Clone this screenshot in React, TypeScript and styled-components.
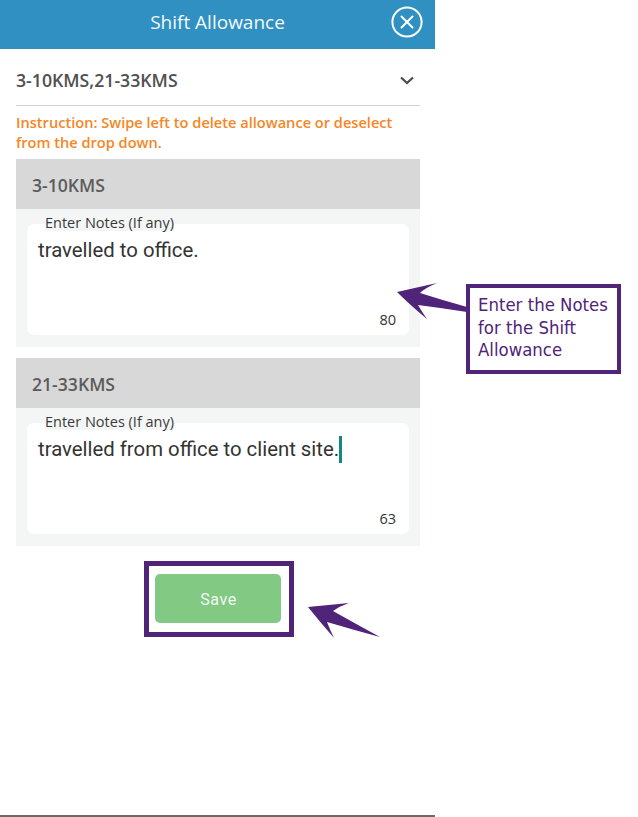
import React from "react";
import styled, { createGlobalStyle } from "styled-components";

const Global = createGlobalStyle`
  html, body { margin: 0; padding: 0; background: #fff; }
  body { font-family: "Open Sans", sans-serif; }
`;

const Page = styled.div`
  position: relative;
  width: 638px;
  height: 817px;
  overflow: hidden;
`;

const Phone = styled.main`
  width: 435px;
  height: 817px;
  box-sizing: border-box;
  border-bottom: 2px solid #6b6b6b;
  display: flex;
  flex-direction: column;
`;

const Header = styled.header`
  height: 49px;
  flex: none;
  box-sizing: border-box;
  padding: 0 12px 5px;
  background: #2f90c1;
  display: grid;
  grid-template-columns: 1fr auto 1fr;
  align-items: center;
`;

const Title = styled.h1`
  grid-column: 2;
  margin: 0;
  font: 400 19px/24px "Open Sans", sans-serif;
  color: #f4f9fc;
`;

const CloseButton = styled.svg`
  grid-column: 3;
  justify-self: end;
  display: block;
`;

const Body = styled.div`
  padding: 0 15px 0 16px;
  display: flex;
  flex-direction: column;
`;

const Select = styled.div`
  height: 57px;
  box-sizing: border-box;
  border-bottom: 1px solid #d2d2d2;
  display: flex;
  align-items: center;
  justify-content: space-between;
  padding: 6px 6px 0 0;
  font: 600 17.7px/22px "Open Sans", sans-serif;
  color: #505050;
`;

const Instruction = styled.p`
  margin: 6px 0 7px;
  font: 600 14.6px/20px "Open Sans", sans-serif;
  color: #f6861f;
`;

const Section = styled.section<{ $last?: boolean }>`
  margin-bottom: ${(p) => (p.$last ? 0 : 11)}px;
`;

const SectionHead = styled.div`
  height: 50px;
  background: #d8d8d8;
  display: flex;
  align-items: center;
  padding: 1px 0 0 16px;
  box-sizing: border-box;
  font: 600 17.6px/22px "Open Sans", sans-serif;
  color: #5c5c5c;
`;

const SectionBody = styled.div`
  background: #f4f6f6;
  padding: 15px 11px 12px;
`;

const NoteBox = styled.div`
  height: 111px;
  background: #fff;
  border-radius: 7px;
  padding: 0 13px 6px 11px;
  box-sizing: border-box;
  display: flex;
  flex-direction: column;
`;

const NoteLabel = styled.span`
  align-self: flex-start;
  margin: -10px 0 0 7px;
  font: 400 14.5px/17px "Open Sans", sans-serif;
  color: #3a3a3a;
  background: #f4f6f6;
`;

const NoteText = styled.div`
  margin-top: 5px;
  font: 400 20.35px/28px Roboto, sans-serif;
  color: #333;
  display: flex;
  align-items: center;
`;

const Caret = styled.i`
  flex: none;
  width: 2.5px;
  height: 27px;
  background: #118a7e;
`;

const Counter = styled.span`
  margin-top: auto;
  align-self: flex-end;
  font: 400 14.5px/18px "Open Sans", sans-serif;
  color: #333;
`;

const SaveRow = styled.div`
  display: flex;
  justify-content: center;
  margin-top: 28px;
  padding-right: 1px;
`;

const SaveButton = styled.button`
  width: 126px;
  height: 49px;
  border: 0;
  border-radius: 5px;
  background: #82c984;
  color: #f2f9f2;
  font: 400 16px/20px Roboto, sans-serif;
  letter-spacing: 0.6px;
  padding: 2px 0 0 2px;
`;

const Overlay = styled.svg`
  position: absolute;
  left: 0;
  top: 0;
  pointer-events: none;
`;

const SaveFrame = styled.div`
  position: absolute;
  left: 144px;
  top: 561px;
  width: 150px;
  height: 76px;
  box-sizing: border-box;
  border: 5px solid #4f2479;
`;

const Callout = styled.aside`
  position: absolute;
  left: 466px;
  top: 284px;
  width: 155px;
  height: 90px;
  box-sizing: border-box;
  border: 4px solid #4f2479;
  background: #fff;
  padding: 6px 0 0 8px;
  font: 400 18.4px/22.5px "DejaVu Sans Condensed", "DejaVu Sans", sans-serif;
  color: #4f2479;
`;

const Arrow = styled.path`
  fill: #4f2479;
`;

const notes = [
  { name: "3-10KMS", text: "travelled to office.", left: 80 },
  { name: "21-33KMS", text: "travelled from office to client site.", left: 63, focus: true },
];

export default function App() {
  return (
    <Page>
      <Global />
      <Phone>
        <Header>
          <Title>Shift Allowance</Title>
          <CloseButton width="32" height="32" viewBox="0 0 32 32" fill="none" stroke="#fff">
            <circle cx="16" cy="16" r="14.6" strokeWidth="2" />
            <path d="M10.5 10.5 L21.5 21.5 M21.5 10.5 L10.5 21.5" strokeWidth="2" strokeLinecap="round" />
          </CloseButton>
        </Header>
        <Body>
          <Select>
            <span>3-10KMS,21-33KMS</span>
            <svg width="14" height="9" viewBox="0 0 14 9" fill="none" stroke="#4a4a4a" strokeWidth="2.2">
              <path d="M1 1.5 L7 7 L13 1.5" />
            </svg>
          </Select>
          <Instruction>Instruction: Swipe left to delete allowance or deselect from the drop down.</Instruction>
          {notes.map((n, i) => (
            <Section key={n.name} $last={i === notes.length - 1}>
              <SectionHead>{n.name}</SectionHead>
              <SectionBody>
                <NoteBox>
                  <NoteLabel>Enter Notes (If any)</NoteLabel>
                  <NoteText>
                    {n.text}
                    {n.focus && <Caret />}
                  </NoteText>
                  <Counter>{n.left}</Counter>
                </NoteBox>
              </SectionBody>
            </Section>
          ))}
          <SaveRow>
            <SaveButton>Save</SaveButton>
          </SaveRow>
        </Body>
      </Phone>
      <SaveFrame />
      <Callout>Enter the Notes for the Shift Allowance</Callout>
      <Overlay width="638" height="817" viewBox="0 0 638 817">
        <Arrow d="M397 292 L437 283 Q425 288 420 293 Q442 300 467 307 L467 312 Q442 308 418 305 Q422 312 427 319 Q410 305 397 292 Z" />
        <Arrow d="M308 607 L349 603 Q340 606 333 611 Q356 624 380 637 Q354 630 327 622 Q330 630 334 638 Q320 622 308 607 Z" />
      </Overlay>
    </Page>
  );
}
